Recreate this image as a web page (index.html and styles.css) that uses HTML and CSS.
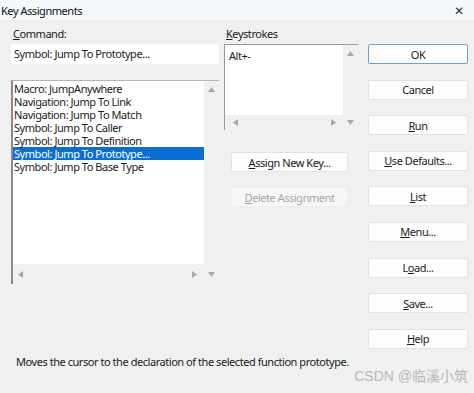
FILE: index.html
```html
<!DOCTYPE html>
<html lang="en">
<head>
    <meta charset="UTF-8">
    <title>Key Assignments</title>
    <link rel="stylesheet" href="styles.css">
</head>
<body>
    <div class="dialog">
        <div class="titlebar">
            <span class="title">Key Assignments</span>
            <span class="close">&#x2715;</span>
        </div>

        <div class="content">
            <div class="col-left">
                <div class="label"><u>C</u>ommand:</div>
                <div class="field">Symbol: Jump To Prototype...</div>
                <div class="listbox">
                    <div class="list-area">
                        <ul class="items">
                            <li>Macro: JumpAnywhere</li>
                            <li>Navigation: Jump To Link</li>
                            <li>Navigation: Jump To Match</li>
                            <li>Symbol: Jump To Caller</li>
                            <li>Symbol: Jump To Definition</li>
                            <li class="selected">Symbol: Jump To Prototype...</li>
                            <li>Symbol: Jump To Base Type</li>
                        </ul>
                        <div class="vscroll">
                            <svg class="arrow" width="7" height="5" viewBox="0 0 7 5"><path d="M3.5 0 L7 5 L0 5 Z"/></svg>
                        </div>
                    </div>
                    <div class="hscroll">
                        <svg class="arrow" width="5" height="7" viewBox="0 0 5 7"><path d="M0 3.5 L5 0 L5 7 Z"/></svg>
                        <svg class="arrow" width="5" height="7" viewBox="0 0 5 7"><path d="M5 3.5 L0 0 L0 7 Z"/></svg>
                        <span class="corner">
                            <svg class="arrow" width="7" height="5" viewBox="0 0 7 5"><path d="M3.5 5 L7 0 L0 0 Z"/></svg>
                        </span>
                    </div>
                </div>
            </div>

            <div class="col-mid">
                <div class="label"><u>K</u>eystrokes</div>
                <div class="listbox keys">
                    <div class="list-area">
                        <ul class="items">
                            <li>Alt+-</li>
                        </ul>
                        <div class="vscroll">
                            <svg class="arrow" width="7" height="5" viewBox="0 0 7 5"><path d="M3.5 0 L7 5 L0 5 Z"/></svg>
                        </div>
                    </div>
                    <div class="hscroll">
                        <svg class="arrow" width="5" height="7" viewBox="0 0 5 7"><path d="M0 3.5 L5 0 L5 7 Z"/></svg>
                        <svg class="arrow" width="5" height="7" viewBox="0 0 5 7"><path d="M5 3.5 L0 0 L0 7 Z"/></svg>
                        <span class="corner">
                            <svg class="arrow" width="7" height="5" viewBox="0 0 7 5"><path d="M3.5 5 L7 0 L0 0 Z"/></svg>
                        </span>
                    </div>
                </div>
                <div class="mid-buttons">
                    <button class="btn"><u>A</u>ssign New Key...</button>
                    <button class="btn disabled"><u>D</u>elete Assignment</button>
                </div>
            </div>

            <div class="col-right">
                <button class="btn default">OK</button>
                <button class="btn">Cancel</button>
                <button class="btn"><u>R</u>un</button>
                <button class="btn"><u>U</u>se Defaults...</button>
                <button class="btn"><u>L</u>ist</button>
                <button class="btn"><u>M</u>enu...</button>
                <button class="btn">L<u>o</u>ad...</button>
                <button class="btn"><u>S</u>ave...</button>
                <button class="btn"><u>H</u>elp</button>
            </div>
        </div>

        <div class="status">Moves the cursor to the declaration of the selected function prototype.</div>
        <div class="watermark">CSDN @临溪小筑</div>
    </div>
</body>
</html>
```

FILE: styles.css
```css
body {
    margin: 0;
    background: #f0f0f0;
    font-family: "Noto Sans", "Open Sans", sans-serif;
    font-size: 11px;
    letter-spacing: -0.45px;
    color: #1a1a1a;
}
.dialog {
    position: relative;
    width: 474px;
    height: 393px;
    background: #f0f0f0;
    overflow: hidden;
}
.titlebar {
    height: 20px;
    background: #f4f7fb;
    display: flex;
    align-items: center;
    justify-content: space-between;
    padding: 0 10px 0 1px;
}
.title {
    font-size: 11px;
    color: #111;
}
.close {
    font-size: 12px;
    color: #333;
}
.content {
    display: flex;
    padding: 7px 0 0 11px;
    height: 327px;
}
.label {
    height: 17px;
    line-height: 13px;
    padding-left: 2px;
}
.col-left {
    width: 208px;
}
.field {
    height: 20px;
    background: #fff;
    line-height: 19px;
    padding-left: 3px;
}
.listbox {
    margin-top: 16px;
    height: 203px;
    background: #fff;
    border-left: 2px solid #8a8a8a;
    border-top: 1px solid #b5b5b5;
    display: flex;
    flex-direction: column;
}
.list-area {
    flex: 1;
    display: flex;
}
.items {
    flex: 1;
    list-style: none;
    margin: 0;
    padding: 1px 0 0 0;
}
.items li {
    height: 13px;
    line-height: 13px;
    padding-left: 1px;
    white-space: nowrap;
}
.items li.selected {
    background: #0a6fd1;
    color: #fff;
}
.vscroll {
    width: 15px;
    background: #f0f0f0;
    display: flex;
    justify-content: center;
    padding-top: 6px;
}
.hscroll {
    height: 20px;
    background: #f0f0f0;
    display: flex;
    align-items: center;
    padding-left: 5px;
}
.hscroll .arrow:nth-child(2) {
    margin-left: auto;
    margin-right: 7px;
}
.corner {
    width: 15px;
    display: flex;
    justify-content: center;
}
.arrow {
    fill: #a8a8a8;
}
.col-mid {
    width: 134px;
    margin-left: 5px;
}
.listbox.keys {
    margin-top: 0;
    height: 85px;
    border-left: 1px solid #9a9a9a;
    border-top: 1px solid #9a9a9a;
}
.listbox.keys .items {
    padding: 4px 0 0 3px;
}
.listbox.keys .hscroll {
    height: 15px;
    padding-left: 8px;
}
.mid-buttons {
    display: flex;
    flex-direction: column;
    gap: 15px;
    padding: 22px 0 0 7px;
}
.mid-buttons .btn {
    width: 117px;
}
.col-right {
    margin-left: 10px;
    display: flex;
    flex-direction: column;
    gap: 15.6px;
    padding-top: 17px;
}
.btn {
    width: 100px;
    height: 20px;
    padding: 0;
    font-family: inherit;
    font-size: 11px;
    letter-spacing: inherit;
    color: #1a1a1a;
    background: #fdfdfd;
    border: 1px solid #e2e2e2;
    border-radius: 2px;
    cursor: pointer;
}
.btn.default {
    border: 1px solid #6e9ed6;
}
.btn.disabled {
    background: #f6f6f6;
    color: #a6a6a6;
    border-color: #ececec;
}
.status {
    padding-left: 16px;
    font-size: 11px;
}
.watermark {
    position: absolute;
    right: 6px;
    bottom: 8px;
    font-family: "Liberation Sans", "Noto Sans CJK SC", sans-serif;
    font-size: 14px;
    letter-spacing: 0;
    color: #b8b8b8;
}
```
